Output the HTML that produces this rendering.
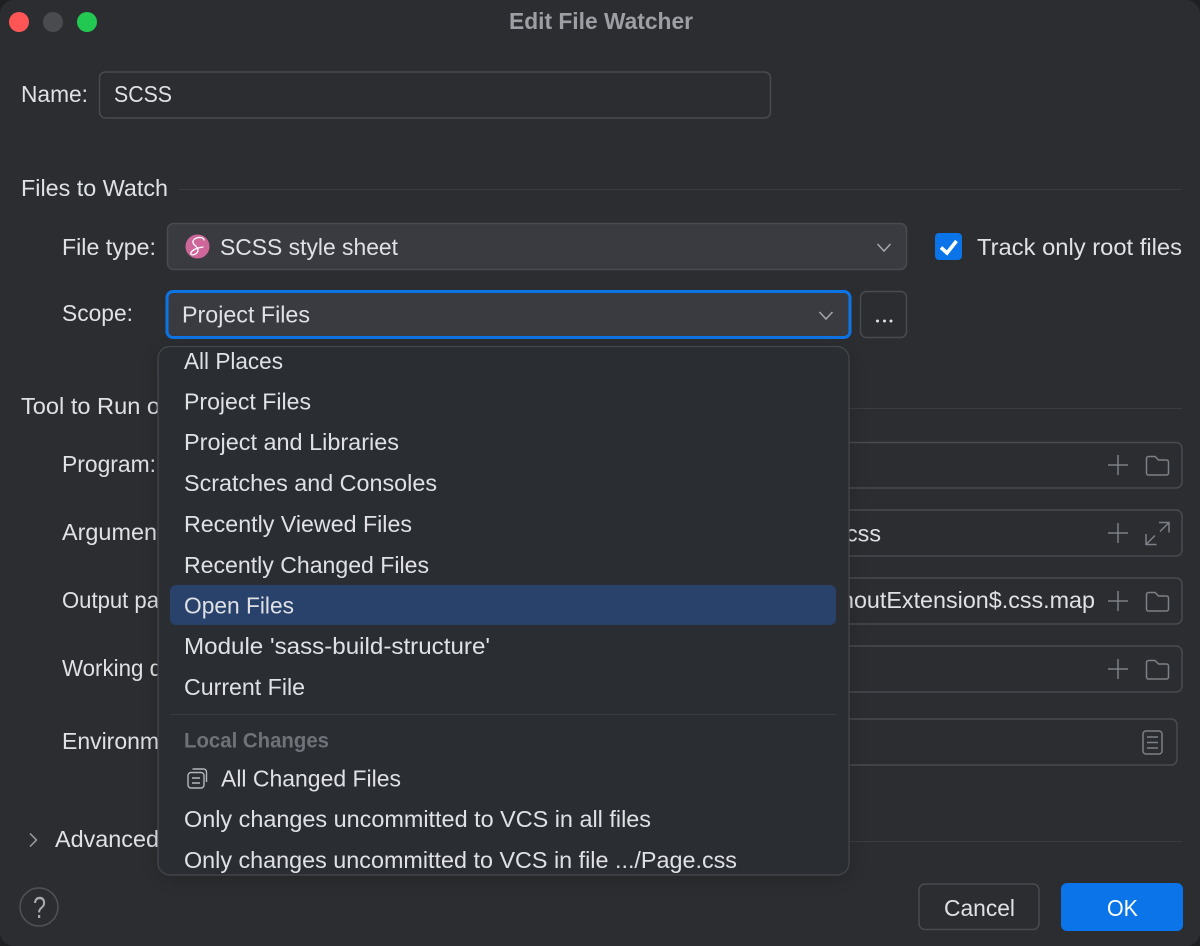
<!DOCTYPE html>
<html lang="en"><head><meta charset="utf-8"><title>Edit File Watcher</title>
<style>
html,body{margin:0;padding:0;background:#1f2022;width:1200px;height:946px;overflow:hidden}
svg{display:block}
text{font-family:"Liberation Sans",sans-serif;font-size:23.5px;fill:#dfe1e5}
.f{fill:none;stroke:#494b50;stroke-width:1.500}
.i{fill:none;stroke:#7d8086;stroke-width:1.500}
</style></head><body>
<svg width="1200" height="946" viewBox="0 0 1200 946" xmlns="http://www.w3.org/2000/svg">
<defs>
<filter id="sh" x="-10%" y="-10%" width="120%" height="120%"><feDropShadow dx="0" dy="4" stdDeviation="10" flood-color="#000" flood-opacity=".18"/></filter>
<g id="plus"><path class="i" d="M-10 0H10M0-10V10"/></g>
<g id="folder"><path class="i" d="M1146.500 473V458.500a2 2 0 0 1 2-2h6.500l3.500 3.500h8a2 2 0 0 1 2 2v11a2 2 0 0 1-2 2h-18a2 2 0 0 1-2-2z"/></g>
</defs>
<rect x="0" y="0" width="1200" height="946" rx="14" fill="#2b2d30"/>

<circle cx="19" cy="22" r="10" fill="#ff5555"/>
<circle cx="53" cy="22" r="10" fill="#4a4b4e"/>
<circle cx="87" cy="22" r="10" fill="#22c852"/>
<text x="509" y="29" textLength="184" lengthAdjust="spacingAndGlyphs" style="font-weight:700;fill:#9d9fa4">Edit File Watcher</text>

<text x="21" y="102" textLength="67" lengthAdjust="spacingAndGlyphs">Name:</text>
<rect class="f" x="99.500" y="72" width="671" height="46" rx="6"/>
<text x="114" y="102" textLength="58" lengthAdjust="spacingAndGlyphs">SCSS</text>

<text x="21" y="196" textLength="147" lengthAdjust="spacingAndGlyphs">Files to Watch</text>
<rect x="179" y="189" width="1003" height="1" fill="#3a3c41"/>

<text x="62" y="255" textLength="94" lengthAdjust="spacingAndGlyphs">File type:</text>
<rect x="167.500" y="223.500" width="739" height="46" rx="6" fill="#393b40" stroke="#494b50" stroke-width="1.500"/>
<circle cx="197.500" cy="246.500" r="12" fill="#cd6799"/>
<path d="M204 240C203 236 195 237 193 241C192 245 198 246 198 250C198 254 192 256 191 254C190 251 196 248 203 247" fill="none" stroke="#fff" stroke-width="1.300" stroke-linecap="round"/>
<text x="220" y="255" textLength="178" lengthAdjust="spacingAndGlyphs">SCSS style sheet</text>
<path d="M877.500 244l6.500 7 6.500-7" fill="none" stroke="#a4a7ad" stroke-width="1.500"/>

<rect x="935" y="233" width="27" height="27" rx="4" fill="#0a74e8"/>
<path d="M941 247.500l6 5.500 9.500-12" fill="none" stroke="#fff" stroke-width="3.600"/>
<text x="977" y="255" textLength="205" lengthAdjust="spacingAndGlyphs">Track only root files</text>

<text x="62" y="321" textLength="71" lengthAdjust="spacingAndGlyphs">Scope:</text>
<rect x="167" y="291.500" width="683" height="46" rx="6" fill="#393b40" stroke="#0d74e6" stroke-width="3"/>
<text x="182" y="322.500" textLength="128" lengthAdjust="spacingAndGlyphs">Project Files</text>
<path d="M819.500 312l6.500 7 6.500-7" fill="none" stroke="#a4a7ad" stroke-width="1.500"/>

<rect class="f" x="860.500" y="291.500" width="46" height="46" rx="6"/>
<circle cx="877.500" cy="321" r="1.500" fill="#dfe1e5"/><circle cx="884.500" cy="321" r="1.500" fill="#dfe1e5"/><circle cx="891" cy="321" r="1.500" fill="#dfe1e5"/>

<text x="21" y="414" textLength="139" lengthAdjust="spacingAndGlyphs">Tool to Run o</text>
<rect x="800" y="408" width="382" height="1" fill="#3a3c41"/>

<text x="62" y="472" textLength="94" lengthAdjust="spacingAndGlyphs">Program:</text>
<text x="62" y="540" textLength="95" lengthAdjust="spacingAndGlyphs">Argumen</text>
<text x="62" y="608" textLength="97" lengthAdjust="spacingAndGlyphs">Output pa</text>
<text x="62" y="676" textLength="100" lengthAdjust="spacingAndGlyphs">Working d</text>
<text x="62" y="749" textLength="97" lengthAdjust="spacingAndGlyphs">Environm</text>
<text x="55" y="847" textLength="104" lengthAdjust="spacingAndGlyphs">Advanced</text>
<path d="M30 833.500l6.500 6.500-6.500 6.500" fill="none" stroke="#9a9da2" stroke-width="1.500"/>
<rect x="800" y="841" width="382" height="1" fill="#3a3c41"/>

<rect class="f" x="167" y="442.500" width="1015" height="45.500" rx="6"/>
<rect class="f" x="167" y="510" width="1015" height="46" rx="6"/>
<rect class="f" x="167" y="578" width="1015" height="46" rx="6"/>
<rect class="f" x="167" y="646" width="1015" height="46" rx="6"/>
<rect class="f" x="167" y="719" width="1010" height="46" rx="6"/>

<text x="846" y="541.500" textLength="35" lengthAdjust="spacingAndGlyphs">css</text>
<text x="841" y="608" textLength="254" lengthAdjust="spacingAndGlyphs">houtExtension$.css.map</text>

<use href="#plus" x="1118" y="465"/>
<use href="#plus" x="1118" y="533"/>
<use href="#plus" x="1118" y="601"/>
<use href="#plus" x="1118" y="669"/>
<use href="#folder"/>
<use href="#folder" y="136"/>
<use href="#folder" y="204"/>
<path class="i" d="M1159 522.500h10v10M1168.500 523l-8.500 8.500M1146 534v10.500h10.500M1146.500 544l8.500-8.500"/>
<rect class="i" x="1143" y="731" width="19" height="23" rx="3"/>
<path class="i" d="M1147 737h11M1147 742.500h11M1147 748h11"/>

<rect x="158" y="346.500" width="691" height="528.500" rx="12" fill="#2b2d30" stroke="#45474c" stroke-width="1.200" filter="url(#sh)"/>
<rect x="170" y="585" width="666" height="40" rx="6" fill="#28426c"/>
<rect x="170" y="714" width="666" height="1" fill="#3a3c41"/>
<text x="184" y="369" textLength="99" lengthAdjust="spacingAndGlyphs">All Places</text>
<text x="184" y="409.500" textLength="127" lengthAdjust="spacingAndGlyphs">Project Files</text>
<text x="184" y="450" textLength="215" lengthAdjust="spacingAndGlyphs">Project and Libraries</text>
<text x="184" y="491" textLength="253" lengthAdjust="spacingAndGlyphs">Scratches and Consoles</text>
<text x="184" y="532" textLength="228" lengthAdjust="spacingAndGlyphs">Recently Viewed Files</text>
<text x="184" y="573" textLength="245" lengthAdjust="spacingAndGlyphs">Recently Changed Files</text>
<text x="184" y="613.500" textLength="110" lengthAdjust="spacingAndGlyphs">Open Files</text>
<text x="184" y="654" textLength="306" lengthAdjust="spacingAndGlyphs">Module 'sass-build-structure'</text>
<text x="184" y="695" textLength="121" lengthAdjust="spacingAndGlyphs">Current File</text>
<text x="184" y="747.500" textLength="145" lengthAdjust="spacingAndGlyphs" style="font-size:21px;font-weight:700;fill:#6f7278">Local Changes</text>
<rect x="188" y="772.500" width="16" height="15.500" rx="3" fill="none" stroke="#b5b8bd" stroke-width="1.400"/>
<path d="M192 778h8M192 783h8M192.500 769h10.500a3 3 0 0 1 3.500 3v10" fill="none" stroke="#b5b8bd" stroke-width="1.400"/>
<text x="221" y="786.500" textLength="180" lengthAdjust="spacingAndGlyphs">All Changed Files</text>
<text x="184" y="827" textLength="467" lengthAdjust="spacingAndGlyphs">Only changes uncommitted to VCS in all files</text>
<text x="184" y="868" textLength="553" lengthAdjust="spacingAndGlyphs">Only changes uncommitted to VCS in file .../Page.css</text>

<circle cx="39" cy="907" r="19" fill="none" stroke="#505257" stroke-width="1.500"/>
<text x="33" y="918" textLength="13" lengthAdjust="spacingAndGlyphs" style="font-size:31px;fill:#a9abb0">?</text>
<rect class="f" x="919" y="884" width="120" height="45.500" rx="6"/>
<text x="944" y="916" textLength="71" lengthAdjust="spacingAndGlyphs">Cancel</text>
<rect x="1061" y="883" width="122" height="48" rx="6" fill="#0a74e8"/>
<text x="1107" y="916" textLength="31" lengthAdjust="spacingAndGlyphs" style="fill:#fff">OK</text>
</svg>
</body></html>
